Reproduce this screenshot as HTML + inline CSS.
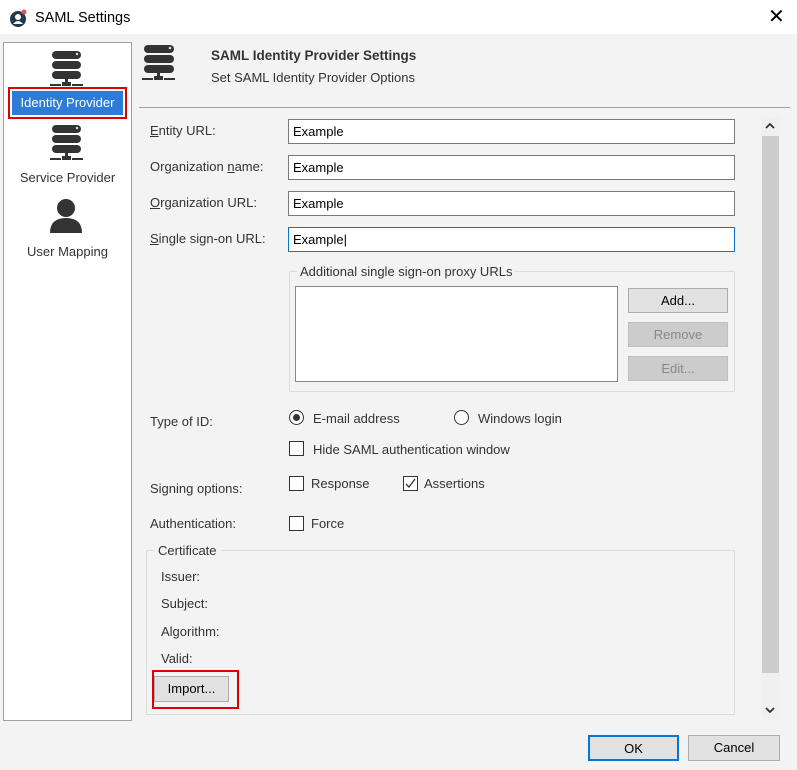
<!DOCTYPE html>
<html><head><meta charset="utf-8"><style>
*{margin:0;padding:0;box-sizing:border-box}
body{width:797px;height:770px;background:#f3f3f3;font-family:"Liberation Sans",sans-serif;font-size:13px;color:#333;position:relative;overflow:hidden}
.a{position:absolute;white-space:nowrap}
.in{position:absolute;left:288px;width:447px;height:25px;background:#fff;border:1px solid #7a7a7a;padding:4px 4px;color:#000;font-size:13px}
.btn{position:absolute;background:#e1e1e1;border:1px solid #adadad;text-align:center;line-height:23px;color:#000}
.dis{background:#ccc;border-color:#bfbfbf;color:#888}
.cb{position:absolute;width:15px;height:15px;border:1px solid #333;background:#fff}
.rb{position:absolute;width:15px;height:15px;border:1px solid #333;border-radius:50%;background:#fff}
.grp{position:absolute;border:1px solid #dcdcdc}
u{text-decoration:underline}
</style></head><body>
<div class="a" style="left:0;top:0;width:797px;height:34px;background:#fff"></div>
<svg class="a" style="left:9px;top:8px" width="20" height="20"><circle cx="9" cy="11" r="8" fill="#233a4a"/><circle cx="9" cy="9" r="3" fill="#fff"/><path d="M4 16 Q9 10 14 16Z" fill="#fff"/><circle cx="15" cy="4" r="2.5" fill="#e05060"/></svg>
<div class="a" style="left:35px;top:10px;font-size:14.5px;color:#000">SAML Settings</div>
<div class="a" style="left:768px;top:4px;font-size:20px;color:#000">✕</div>

<div class="a" style="left:3px;top:42px;width:129px;height:679px;background:#fff;border:1px solid #a0a0a0"></div>
<svg class="a" style="left:50px;top:49px" width="34" height="38"><g fill="#333"><rect x="2" y="2" width="29" height="8" rx="4"/><rect x="2" y="12" width="29" height="8" rx="4"/><rect x="2" y="22" width="29" height="8" rx="4"/><rect x="15" y="30" width="3" height="5"/><rect x="0" y="35" width="11" height="2"/><rect x="12" y="33" width="9" height="4"/><rect x="22" y="35" width="11" height="2"/></g><circle cx="27" cy="5" r="1.2" fill="#ddd"/></svg>
<div class="a" style="left:8px;top:87px;width:119px;height:32px;border:2px solid #e00000"></div>
<div class="a" style="left:12px;top:91px;width:111px;height:24px;background:#2f7bd8;color:#fff;text-align:center;line-height:24px">Identity Provider</div>
<svg class="a" style="left:50px;top:123px" width="34" height="38"><g fill="#333"><rect x="2" y="2" width="29" height="8" rx="4"/><rect x="2" y="12" width="29" height="8" rx="4"/><rect x="2" y="22" width="29" height="8" rx="4"/><rect x="15" y="30" width="3" height="5"/><rect x="0" y="35" width="11" height="2"/><rect x="12" y="33" width="9" height="4"/><rect x="22" y="35" width="11" height="2"/></g><circle cx="27" cy="5" r="1.2" fill="#ddd"/></svg>
<div class="a" style="left:3px;top:170px;width:129px;text-align:center">Service Provider</div>
<svg class="a" style="left:48px;top:197px" width="36" height="38"><circle cx="18" cy="11" r="9" fill="#333"/><path d="M2 36 Q2 21 18 21 Q34 21 34 36Z" fill="#333"/></svg>
<div class="a" style="left:3px;top:244px;width:129px;text-align:center">User Mapping</div>

<svg class="a" style="left:142px;top:43px" width="36" height="40"><g fill="#333"><rect x="2" y="2" width="30" height="8" rx="4"/><rect x="2" y="12" width="30" height="8" rx="4"/><rect x="2" y="22" width="30" height="8" rx="4"/><rect x="15" y="30" width="3" height="5"/><rect x="0" y="35" width="11" height="2"/><rect x="12" y="33" width="9" height="4"/><rect x="22" y="35" width="11" height="2"/></g><circle cx="28" cy="5" r="1.3" fill="#ddd"/></svg>
<div class="a" style="left:211px;top:48px;font-weight:bold;font-size:13.5px">SAML Identity Provider Settings</div>
<div class="a" style="left:211px;top:70px">Set SAML Identity Provider Options</div>
<div class="a" style="left:139px;top:107px;width:651px;height:1px;background:#a0a0a0"></div>

<div class="a" style="left:761px;top:117px;width:19px;height:602px;background:#f0f0f0"></div>
<div class="a" style="left:762px;top:136px;width:17px;height:537px;background:#cdcdcd"></div>
<svg class="a" style="left:765px;top:122px" width="10" height="8"><path d="M1 6 L5 2 L9 6" stroke="#333" stroke-width="1.8" fill="none"/></svg>
<svg class="a" style="left:765px;top:706px" width="10" height="8"><path d="M1 2 L5 6 L9 2" stroke="#333" stroke-width="1.8" fill="none"/></svg>

<div class="a" style="left:150px;top:123px"><u>E</u>ntity URL:</div>
<div class="a" style="left:150px;top:159px">Organization <u>n</u>ame:</div>
<div class="a" style="left:150px;top:195px"><u>O</u>rganization URL:</div>
<div class="a" style="left:150px;top:231px"><u>S</u>ingle sign-on URL:</div>
<div class="in" style="top:119px">Example</div>
<div class="in" style="top:155px">Example</div>
<div class="in" style="top:191px">Example</div>
<div class="in" style="top:227px;border-color:#0078d7">Example|</div>

<div class="grp" style="left:289px;top:271px;width:446px;height:121px"></div>
<div class="a" style="left:297px;top:264px;background:#f3f3f3;padding:0 3px">Additional single sign-on proxy URLs</div>
<div class="a" style="left:295px;top:286px;width:323px;height:96px;background:#fff;border:1px solid #828790"></div>
<div class="btn" style="left:628px;top:288px;width:100px;height:25px">Add...</div>
<div class="btn dis" style="left:628px;top:322px;width:100px;height:25px">Remove</div>
<div class="btn dis" style="left:628px;top:356px;width:100px;height:25px">Edit...</div>

<div class="a" style="left:150px;top:414px">Type of ID:</div>
<div class="rb" style="left:289px;top:410px"><div style="position:absolute;left:3px;top:3px;width:7px;height:7px;border-radius:50%;background:#333"></div></div>
<div class="a" style="left:313px;top:411px">E-mail address</div>
<div class="rb" style="left:454px;top:410px"></div>
<div class="a" style="left:478px;top:411px">Windows login</div>
<div class="cb" style="left:289px;top:441px"></div>
<div class="a" style="left:313px;top:442px">Hide SAML authentication window</div>
<div class="a" style="left:150px;top:481px">Signing options:</div>
<div class="cb" style="left:289px;top:476px"></div>
<div class="a" style="left:311px;top:476px">Response</div>
<div class="cb" style="left:403px;top:476px"><svg width="13" height="13" style="position:absolute;left:0;top:0"><path d="M2 7 L5 10 L11 2" stroke="#333" stroke-width="1.3" fill="none"/></svg></div>
<div class="a" style="left:424px;top:476px">Assertions</div>
<div class="a" style="left:150px;top:516px">Authentication:</div>
<div class="cb" style="left:289px;top:516px"></div>
<div class="a" style="left:311px;top:516px">Force</div>

<div class="grp" style="left:146px;top:550px;width:589px;height:165px"></div>
<div class="a" style="left:154px;top:543px;background:#f3f3f3;padding:0 4px">Certificate</div>
<div class="a" style="left:161px;top:569px">Issuer:</div>
<div class="a" style="left:161px;top:596px">Subject:</div>
<div class="a" style="left:161px;top:624px">Algorithm:</div>
<div class="a" style="left:161px;top:651px">Valid:</div>
<div class="a" style="left:152px;top:670px;width:87px;height:39px;border:2px solid #e00000"></div>
<div class="btn" style="left:154px;top:676px;width:75px;height:26px">Import...</div>

<div class="btn" style="left:588px;top:735px;width:91px;height:26px;border:2px solid #0078d7">OK</div>
<div class="btn" style="left:688px;top:735px;width:92px;height:26px">Cancel</div>
</body></html>
